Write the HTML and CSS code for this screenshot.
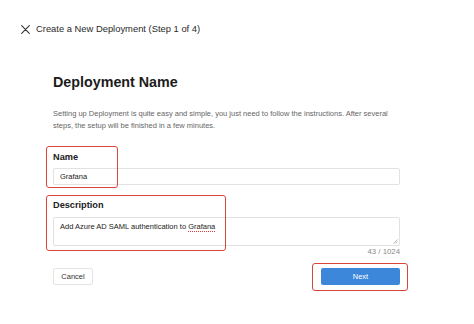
FILE: index.html
```html
<!DOCTYPE html>
<html lang="en">
<head>
<meta charset="utf-8">
<title>Create a New Deployment</title>
<link rel="stylesheet" href="styles.css">
</head>
<body>
<header class="topbar">
  <svg class="close-icon" width="9" height="9" viewBox="0 0 9 9" aria-hidden="true">
    <path d="M0.7 0.7 L8.3 8.3 M8.3 0.7 L0.7 8.3" stroke="#333" stroke-width="1.1" fill="none" stroke-linecap="round"/>
  </svg>
  <span class="topbar-title">Create a New Deployment (Step 1 of 4)</span>
</header>
<main class="content">
  <h1 class="heading">Deployment Name</h1>
  <p class="intro">Setting up Deployment is quite easy and simple, you just need to follow the instructions. After several steps, the setup will be finished in a few minutes.</p>

  <div class="field field-name">
    <label class="field-label">Name</label>
    <div class="input">Grafana</div>
    <span class="mark mark-name"></span>
  </div>

  <div class="field field-desc">
    <label class="field-label">Description</label>
    <div class="textarea">Add Azure AD SAML authentication to <span class="misspelled">Grafana</span>
      <svg class="grip" width="5" height="5" viewBox="0 0 5 5" aria-hidden="true">
        <path d="M0.5 4.5 L4.5 0.5 M2.5 4.5 L4.5 2.5" stroke="#999" stroke-width="0.7" fill="none"/>
      </svg>
    </div>
    <span class="mark mark-desc"></span>
  </div>
  <div class="counter">43 / 1024</div>

  <div class="actions">
    <button class="btn btn-cancel">Cancel</button>
    <div class="next-wrap">
      <button class="btn btn-next">Next</button>
      <span class="mark mark-next"></span>
    </div>
  </div>
</main>
</body>
</html>
```

FILE: styles.css
```css
* { box-sizing: border-box; }
html, body {
  margin: 0;
  padding: 0;
  background: #ffffff;
}
body {
  width: 474px;
  height: 324px;
  overflow: hidden;
  font-family: "Liberation Sans", Arial, sans-serif;
  color: #222;
}
.topbar {
  display: flex;
  align-items: center;
  gap: 6px;
  padding: 22px 0 0 21px;
  height: 36px;
}
.close-icon { display: block; }
.topbar-title {
  font-size: 9.4px;
  line-height: 14px;
  color: #2a2a2a;
}
.content {
  width: 347px;
  margin-left: 53px;
}
.heading {
  margin: 36px 0 0 0;
  font-size: 14.3px;
  line-height: 20px;
  font-weight: 700;
  color: #1c1c1c;
}
.intro {
  margin: 16px 0 0 0;
  font-size: 7.5px;
  line-height: 12px;
  color: #666666;
}
.field {
  position: relative;
}
.field-name { margin-top: 18.5px; }
.field-desc { margin-top: 14px; }
.field-label {
  display: block;
  font-size: 9.2px;
  line-height: 12px;
  font-weight: 700;
  color: #222;
}
.input {
  margin-top: 5.5px;
  height: 17px;
  border: 1px solid #e2e2e2;
  border-radius: 2px;
  padding: 0 6px;
  font-size: 7.5px;
  line-height: 15px;
  color: #222;
}
.textarea {
  position: relative;
  margin-top: 6px;
  height: 29px;
  border: 1px solid #e2e2e2;
  border-radius: 2px;
  padding: 3px 6px;
  font-size: 7.5px;
  line-height: 12px;
  color: #222;
}
.misspelled {
  text-decoration: underline dotted #e0403a;
  text-decoration-thickness: 1px;
  text-underline-offset: 1.5px;
}
.grip {
  position: absolute;
  right: 1px;
  bottom: 1px;
}
.counter {
  text-align: right;
  font-size: 7.8px;
  line-height: 12px;
  color: #8a8a8a;
}
.actions {
  display: flex;
  justify-content: space-between;
  align-items: center;
  margin-top: 10px;
}
.btn {
  font-family: inherit;
  font-size: 7.5px;
  height: 17px;
  border-radius: 2px;
  padding: 0;
  cursor: pointer;
}
.btn-cancel {
  width: 40px;
  background: #fff;
  border: 1px solid #e4e4e4;
  color: #333;
}
.next-wrap { position: relative; }
.btn-next {
  display: block;
  width: 79px;
  background: #3d87db;
  border: none;
  color: #fff;
}
.mark {
  position: absolute;
  border: 1.5px solid #d9453b;
  border-radius: 3px;
  pointer-events: none;
}
.mark-name { left: -7px; top: -5px; width: 72px; bottom: -3px; }
.mark-desc { left: -7px; top: -4px; width: 180px; bottom: -5px; }
.mark-next { left: -9px; top: -5px; right: -8px; bottom: -6px; }
```
